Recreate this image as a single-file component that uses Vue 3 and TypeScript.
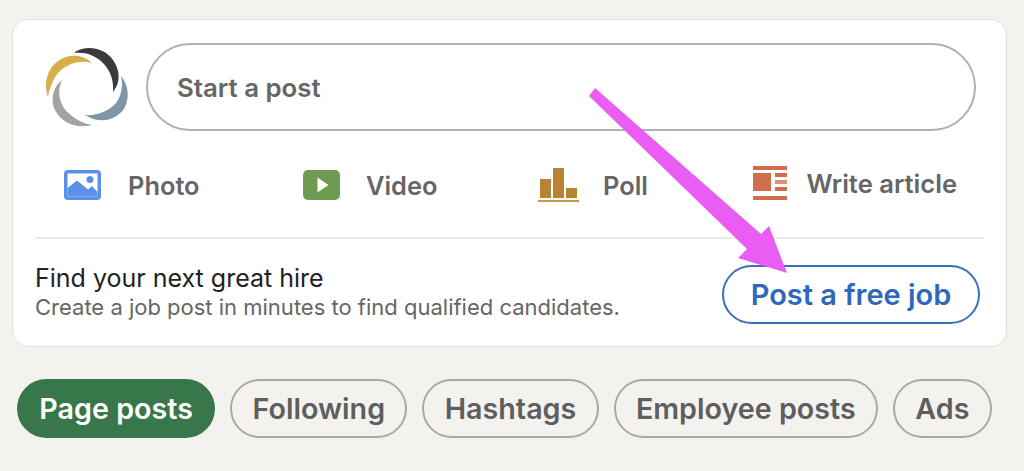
<template>
  <div class="page">
    <section class="card">
      <div class="composer">
        <svg class="logo" viewBox="44 46 86 82" width="86" height="82">
          <path fill="#3a3a3a" d="M75 52C86 45 104 47 113 60C120 70 121 82 113 92C114 80 110 70 103 63C95 55 85 52 75 53Z" />
          <path fill="#7d97a8" d="M121 76C128 84 130 96 125 107C118 120 100 125 85 115C97 116 109 111 116 103C122 95 123 85 121 76Z" />
          <path fill="#a3a3a1" d="M62 80C53 87 50 100 55 110C62 124 78 129 92 125C80 123 70 116 64 108C58 99 58 89 62 80Z" />
          <path fill="#d8ad4c" d="M92 63C85 56 75 54 66 57C50 62 42 80 48 97C50 86 54 77 60 71C69 63 81 60 92 63Z" />
        </svg>
        <button class="start-post">Start a post</button>
      </div>

      <div class="actions">
        <div v-for="action in actions" :key="action.label" class="action" :class="action.cls">
          <svg v-if="action.cls === 'photo'" class="icon" viewBox="0 0 37 30" width="37" height="30">
            <rect width="37" height="30" rx="4" fill="#5a91e6" />
            <rect x="3.500" y="3.500" width="30" height="23" fill="#fff" />
            <circle cx="26" cy="9.500" r="3.500" fill="#5a91e6" />
            <path fill="#5a91e6" d="M3.500 18L13 10.500L24 19.500L28 16L33.500 22V26.500H3.500Z" />
          </svg>
          <svg v-else-if="action.cls === 'video'" class="icon" viewBox="0 0 37 30" width="37" height="30">
            <rect width="37" height="30" rx="5" fill="#6f9a52" />
            <path fill="#fff" d="M14.500 7.500L25.500 15L14.500 22.500Z" />
          </svg>
          <svg v-else-if="action.cls === 'poll'" class="icon" viewBox="0 0 41 34" width="41" height="34">
            <rect x="2" y="11" width="11" height="19" fill="#b88434" />
            <rect x="15" y="0" width="11" height="30" fill="#b88434" />
            <rect x="28" y="20" width="11" height="10" fill="#b88434" />
            <rect x="0" y="32" width="41" height="2" fill="#c9964c" />
          </svg>
          <svg v-else class="icon" viewBox="0 0 34 34" width="34" height="34">
            <g fill="#cf6d4c">
              <rect x="0" y="0" width="34" height="4" />
              <rect x="0" y="7" width="18" height="18" />
              <rect x="22" y="7" width="12" height="4" />
              <rect x="22" y="14" width="12" height="4" opacity="0.75" />
              <rect x="22" y="21" width="12" height="4" />
              <rect x="0" y="30" width="34" height="4" />
            </g>
          </svg>
          <span class="action-label">{{ action.label }}</span>
        </div>
      </div>

      <div class="hire">
        <div class="hire-copy">
          <div class="hire-title">Find your next great hire</div>
          <div class="hire-sub">Create a job post in minutes to find qualified candidates.</div>
        </div>
        <button class="post-job">Post a free job</button>
      </div>
    </section>

    <div class="filters">
      <button
        v-for="f in filters"
        :key="f"
        class="chip"
        :class="{ active: f === 'Page posts' }"
      >
        {{ f }}
      </button>
    </div>

    <!-- annotation drawn over the screenshot -->
    <svg class="arrow" viewBox="0 0 1024 471" width="1024" height="471">
      <path fill="#e95df3" d="M595 88L761 234L769 226L787 273L738 258L747 249L589 96Z" />
    </svg>
  </div>
</template>

<script setup lang="ts">
const actions = [
  { label: 'Photo', cls: 'photo' },
  { label: 'Video', cls: 'video' },
  { label: 'Poll', cls: 'poll' },
  { label: 'Write article', cls: 'article' },
]

const filters = ['Page posts', 'Following', 'Hashtags', 'Employee posts', 'Ads']
</script>

<style>
html,
body {
  margin: 0;
  background: #f3f2ef;
}
</style>

<style scoped>
.page {
  position: relative;
  width: 1024px;
  height: 471px;
  overflow: hidden;
  padding: 19px 0 0 12px;
  box-sizing: border-box;
  background: #f3f2ef;
  font-family: Inter, "Liberation Sans", sans-serif;
}

.card {
  width: 995px;
  height: 328px;
  box-sizing: border-box;
  padding: 23px 22px 0 22px;
  background: #fff;
  border: 1px solid #e2e1de;
  border-radius: 16px;
}

.composer {
  display: flex;
  align-items: center;
  gap: 16px;
  padding-left: 9px;
}

.logo {
  flex: none;
}

.start-post {
  flex: none;
  width: 830px;
  height: 88px;
  padding: 0 29px;
  text-align: left;
  background: #fff;
  border: 2px solid #b0b0ae;
  border-radius: 44px;
  color: #666;
  font: 600 25.8px Inter, sans-serif;
}

.actions {
  display: grid;
  grid-template-columns: 239px 235px 215px auto;
  align-items: center;
  box-sizing: border-box;
  height: 108px;
  padding: 2px 0 0 29px;
  border-bottom: 2px solid #ebebe9;
}

.action {
  display: flex;
  align-items: center;
  color: #666;
  font-size: 25.4px;
  font-weight: 600;
}

.photo .icon {
  margin-right: 27px;
}

.video .icon {
  margin-right: 26px;
}

.poll .icon {
  margin-right: 24px;
}

.article .icon {
  margin-right: 19.5px;
}

.article {
  position: relative;
  top: -2px;
  font-size: 25.6px;
}

.hire {
  display: flex;
  align-items: center;
  justify-content: space-between;
  padding: 24px 4px 0 0;
}

.hire-copy {
  padding-bottom: 5px;
}

.hire-title {
  color: #222;
  font-size: 25px;
  line-height: 30px;
}

.hire-sub {
  color: #666;
  font-size: 22px;
  line-height: 28px;
}

.post-job {
  width: 258px;
  height: 59px;
  padding: 0;
  background: #fff;
  border: 2px solid #3a6fc0;
  border-radius: 30px;
  color: #2f67bd;
  font: 600 29px Inter, sans-serif;
}

.filters {
  display: flex;
  gap: 15px;
  margin: 32px 0 0 5px;
}

.chip {
  height: 59px;
  padding: 0 20.3px;
  background: transparent;
  border: 2px solid #aaa9a6;
  border-radius: 30px;
  color: #5e5e5e;
  font: 600 28.7px Inter, sans-serif;
}

.chip.active {
  background: #37774a;
  border-color: #37774a;
  color: #fff;
}

.arrow {
  position: absolute;
  left: 0;
  top: 0;
  pointer-events: none;
}
</style>
